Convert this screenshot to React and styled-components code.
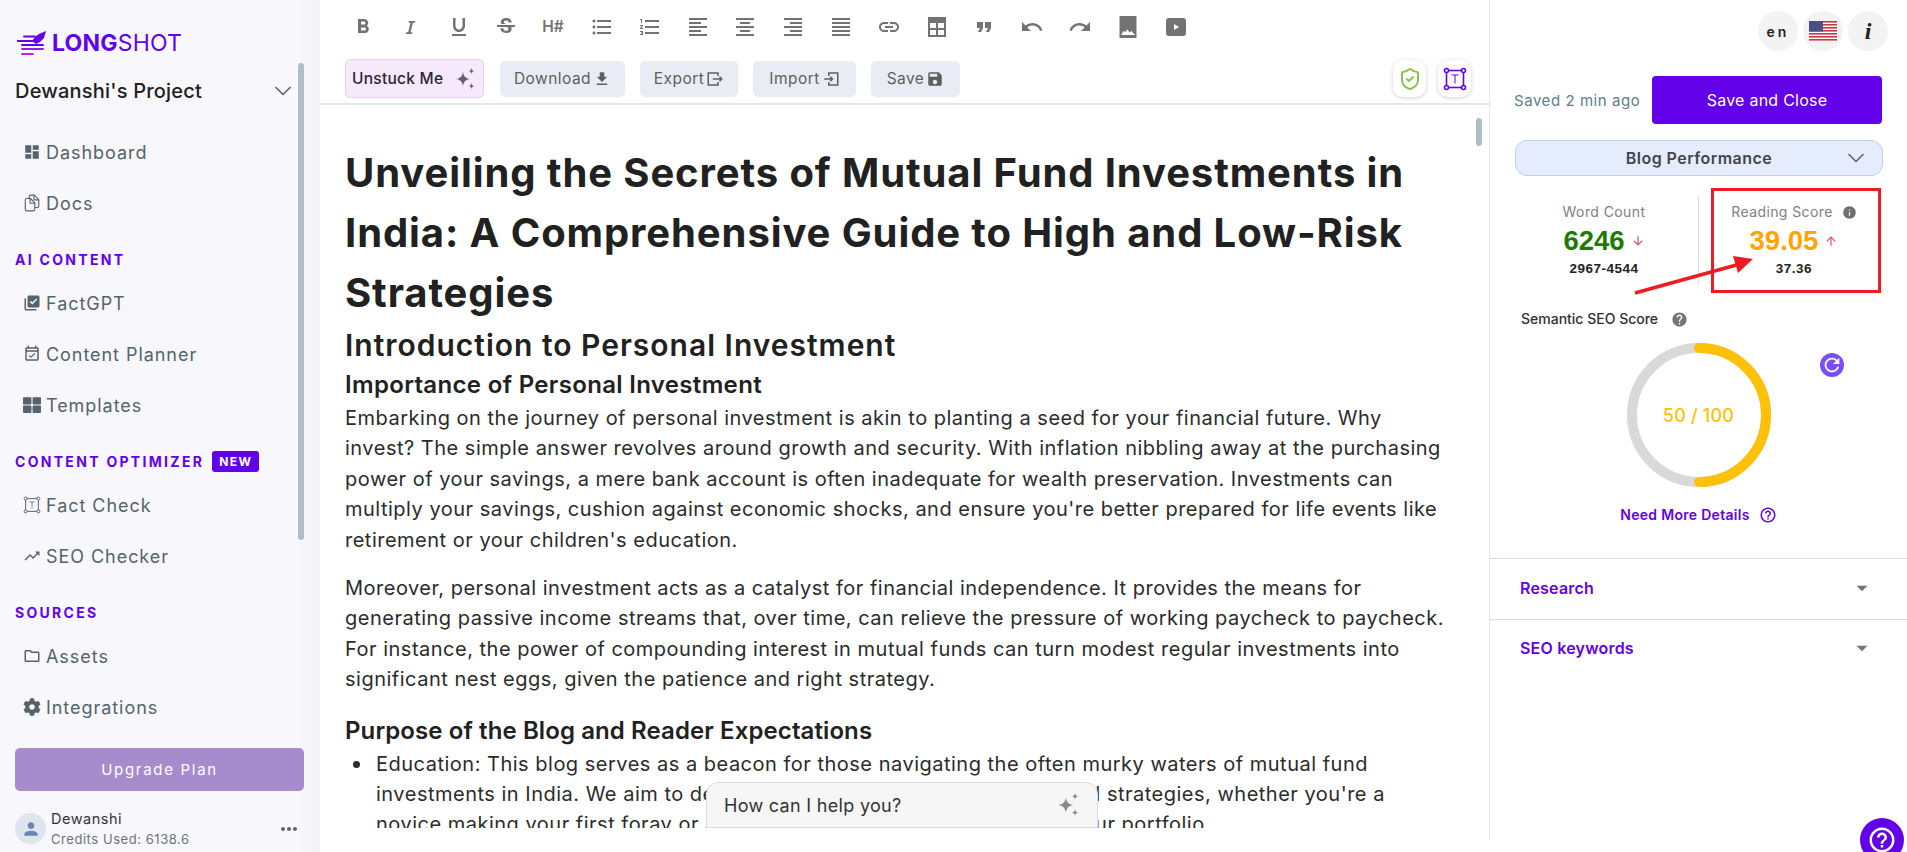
import React from "react";
import styled, { createGlobalStyle } from "styled-components";
import {
  MdFormatBold, MdFormatUnderlined, MdStrikethroughS, MdFormatListBulleted, MdFormatListNumbered,
  MdFormatAlignLeft, MdFormatAlignCenter, MdFormatAlignRight, MdFormatAlignJustify, MdLink, MdFormatQuote,
  MdUndo, MdRedo, MdFileDownload, MdSave, MdDashboard, MdLibraryAddCheck, MdOutlineEventAvailable,
  MdTrendingUp, MdOutlineFolder, MdInfo, MdHelp, MdOutlineHelpOutline, MdArrowDropDown,
  MdPerson, MdMoreHoriz, MdRefresh, MdArrowDownward, MdArrowUpward,
} from "react-icons/md";
import { FaCog, FaItalic, FaThLarge } from "react-icons/fa";
import { IoDocumentsOutline } from "react-icons/io5";
import { ShieldCheck, ChevronDown } from "lucide-react";

const PURPLE = "#6200ea";
const UI_FONT = '"Inter", "Noto Sans", sans-serif';

const Global = createGlobalStyle`
  html, body { margin: 0; padding: 0; background: #fff; }
  body { font-family: ${UI_FONT}; overflow: hidden; }
  * { box-sizing: border-box; }
`;

const Page = styled.div`
  position: relative;
  width: 1907px;
  height: 852px;
  overflow: hidden;
  display: grid;
  grid-template-columns: 320px 1170px 417px;
  background: #fff;
`;

/* ---------- sidebar ---------- */
const Sidebar = styled.aside`
  position: relative;
  height: 852px;
  background: linear-gradient(90deg, #f7f7fc 0, #f7f7fc 300px, #f1f1f6 320px);
  padding: 31px 16px 0 15px;
  display: flex;
  flex-direction: column;
`;
const Thumb = styled.div`
  position: absolute;
  left: 298px;
  top: 63px;
  width: 6px;
  height: 477px;
  border-radius: 3px;
  background: #b0bec5;
`;
const Logo = styled.div`
  display: flex;
  align-items: center;
  gap: 5px;
  height: 25px;
  margin-left: 2px;
  color: ${PURPLE};
  font-size: 23px;
  line-height: 25px;
  letter-spacing: 0.2px;
  b { font-weight: 700; }
  span { font-weight: 400; }
`;
const ProjectRow = styled.div`
  display: flex;
  align-items: center;
  justify-content: space-between;
  margin-top: 20px;
  height: 30px;
  padding-right: 7px;
  font-size: 20px;
  letter-spacing: 0.2px;
  font-weight: 500;
  color: #212121;
  svg { color: #666; }
`;
const NavList = styled.div`
  margin-top: 20.5px;
  display: flex;
  flex-direction: column;
`;
const NavItem = styled.div`
  height: 51px;
  display: flex;
  align-items: center;
  gap: 5px;
  padding-left: 8px;
  font-size: 18px;
  letter-spacing: 0.95px;
  color: #56636b;
  svg { width: 18px; height: 18px; flex: none; }
`;
const SectionLabel = styled.div`
  height: 49px;
  display: flex;
  align-items: center;
  gap: 8px;
  padding-top: 12px;
  font-size: 14px;
  font-weight: 700;
  letter-spacing: 2.3px;
  color: ${PURPLE};
`;
const NewBadge = styled.span`
  background: ${PURPLE};
  color: #fff;
  border-radius: 3px;
  font-size: 12px;
  line-height: 21px;
  padding: 0 7px;
  letter-spacing: 1.4px;
`;
const UpgradeButton = styled.div`
  margin-top: 15px;
  width: 289px;
  height: 43px;
  border-radius: 5px;
  background: #a78ccd;
  color: #fff;
  display: flex;
  align-items: center;
  justify-content: center;
  font-size: 15px;
  letter-spacing: 1.7px;
`;
const UserRow = styled.div`
  margin-top: 18px;
  width: 289px;
  display: flex;
  align-items: center;
  gap: 5px;
  padding-right: 3px;
`;
const Avatar = styled.div`
  width: 31px;
  height: 31px;
  border-radius: 50%;
  background: #dfe5ec;
  color: #6b86b4;
  display: flex;
  align-items: center;
  justify-content: center;
`;
const UserText = styled.div`
  flex: 1;
  line-height: 20px;
  div:first-child { font-size: 14.5px; color: #333; letter-spacing: 0.5px; }
  div:last-child { font-size: 13px; color: #6c757d; letter-spacing: 0.55px; }
`;

/* ---------- editor ---------- */
const Editor = styled.main`
  position: relative;
  height: 840px;
  border-right: 1px solid #e8e8e8;
  display: flex;
  flex-direction: column;
`;
const Toolbar = styled.div`
  height: 105px;
  flex: none;
  border-bottom: 2px solid #e6e6e6;
  padding: 15px 18px 0 25px;
`;
const FormatRow = styled.div`
  display: flex;
  height: 24px;
  align-items: center;
  padding-left: 6px;
`;
const FormatButton = styled.div`
  width: 47.8px;
  flex: none;
  color: #737373;
  font-size: 15.5px;
  font-weight: 600;
  display: flex;
  svg { width: 24px; height: 24px; }
`;
const ActionRow = styled.div`
  margin-top: 20px;
  display: flex;
  align-items: center;
`;
const UnstuckButton = styled.div`
  width: 139px;
  height: 39px;
  margin-right: 16px;
  border-radius: 5px;
  background: #f5e9fb;
  border: 1px solid #e6cff2;
  padding: 0 6px;
  display: flex;
  align-items: center;
  justify-content: space-between;
  font-size: 15.5px;
  letter-spacing: 0.25px;
  font-weight: 500;
  color: #2c2438;
`;
const ActionButton = styled.div`
  height: 36px;
  width: ${(p) => p.$w}px;
  margin-right: ${(p) => p.$gap}px;
  border-radius: 5px;
  background: #e9ecf4;
  color: #5f5f5f;
  display: flex;
  align-items: center;
  justify-content: center;
  gap: 2px;
  font-size: 15.5px;
  letter-spacing: 0.45px;
  svg { width: 18px; height: 18px; }
`;
const ToolIcons = styled.div`
  margin-left: auto;
  display: flex;
  gap: 12px;
`;
const ToolIcon = styled.div`
  width: 33px;
  height: 37px;
  border-radius: 10px;
  background: #fff;
  box-shadow: 0 1px 4px rgba(0, 0, 0, 0.18);
  display: flex;
  align-items: center;
  justify-content: center;
`;
const Scroller = styled.div`
  height: 723px;
  overflow: hidden;
  padding: 38px 0 0 25px;
  color: #212121;
  white-space: nowrap;
`;
const EditorThumb = styled.div`
  position: absolute;
  left: 1156px;
  top: 118px;
  width: 6px;
  height: 28px;
  border-radius: 3px;
  background: #b0bec5;
`;
const Title = styled.h1`
  margin: 0;
  font-size: 40px;
  letter-spacing: 0.9px;
  line-height: 60px;
  font-weight: 700;
`;
const SubTitle = styled.h2`
  margin: 0;
  font-size: 30px;
  letter-spacing: 1px;
  line-height: 44px;
  font-weight: 600;
`;
const SubHead = styled.h3`
  margin: ${(p) => p.$top || 0}px 0 0;
  font-size: 24px;
  letter-spacing: ${(p) => p.$ls}px;
  line-height: 36px;
  font-weight: 600;
`;
const Para = styled.p`
  margin: ${(p) => p.$top || 0}px 0 0;
  font-size: 20px;
  letter-spacing: 0.5px;
  line-height: 30.4px;
  color: #2b2b2b;
`;
const Bullets = styled.ul`
  margin: 0;
  padding-left: 31px;
  list-style: none;
  font-size: 20px;
  letter-spacing: 0.5px;
  line-height: 30.4px;
  color: #2b2b2b;
`;
const Bullet = styled.li`
  position: relative;
  &::before {
    content: "";
    position: absolute;
    left: -23px;
    top: 12px;
    width: 7px;
    height: 7px;
    border-radius: 50%;
    background: #2b2b2b;
  }
`;
const ChatBox = styled.div`
  position: absolute;
  left: 706px;
  top: 782px;
  width: 392px;
  height: 46px;
  background: #f6f6f6;
  border: 1px solid #dcdcdc;
  border-radius: 12px 12px 0 0;
  padding: 0 16px 0 17px;
  display: flex;
  align-items: center;
  justify-content: space-between;
  font-size: 18px;
  letter-spacing: 0.3px;
  color: #333;
`;

/* ---------- right panel ---------- */
const Panel = styled.aside`
  height: 852px;
  display: flex;
  flex-direction: column;
`;
const TopChips = styled.div`
  display: flex;
  justify-content: flex-end;
  gap: 5px;
  padding: 11px 19px 0 0;
`;
const Chip = styled.div`
  width: 40px;
  height: 40px;
  border-radius: 50%;
  background: #f3f3f3;
  display: flex;
  align-items: center;
  justify-content: center;
  font-size: 14px;
  font-weight: 600;
  color: #222;
  letter-spacing: 3px;
`;
const InfoGlyph = styled.span`
  font-family: "Liberation Serif", serif;
  font-style: italic;
  font-weight: 700;
  font-size: 24px;
  letter-spacing: 0;
`;
const SaveRow = styled.div`
  margin-top: 25px;
  display: flex;
  align-items: center;
  justify-content: space-between;
  padding: 0 25px 0 24px;
`;
const SavedText = styled.span`
  font-size: 15px;
  letter-spacing: 0.55px;
  color: #607d8b;
`;
const SaveClose = styled.div`
  width: 230px;
  height: 48px;
  border-radius: 4px;
  background: ${PURPLE};
  color: #fff;
  display: flex;
  align-items: center;
  justify-content: center;
  font-size: 16px;
  letter-spacing: 0.25px;
`;
const PerfSelect = styled.div`
  position: relative;
  margin: 16px 24px 0 25px;
  height: 36px;
  border-radius: 12px;
  background: #e5ecfb;
  border: 1px solid #c3cde0;
  display: flex;
  align-items: center;
  justify-content: center;
  font-size: 16px;
  letter-spacing: 0.45px;
  font-weight: 600;
  color: #44444f;
  svg { position: absolute; right: 12px; top: 3px; color: #666; }
`;
const Stats = styled.div`
  margin-top: 20px;
  height: 89px;
  display: grid;
  grid-template-columns: 209px 1fr;
`;
const Stat = styled.div`
  padding-left: ${(p) => p.$pad || 0}px;
  padding-top: 6px;
  width: ${(p) => p.$w || "auto"};
  text-align: center;
  border-right: ${(p) => (p.$line ? "1px solid #dcdcdc" : "none")};
`;
const StatLabel = styled.div`
  font-size: 14px;
  line-height: 20px;
  color: #808080;
  display: flex;
  justify-content: center;
  align-items: center;
  gap: 9px;
  letter-spacing: 0.4px;
  svg { color: #6f6f6f; }
`;
const StatValue = styled.div`
  margin-top: 2px;
  font-family: "Liberation Sans", Arial, sans-serif;
  font-weight: 700;
  font-size: 27.5px;
  line-height: 34px;
  color: ${(p) => p.$color};
  display: flex;
  justify-content: center;
  align-items: center;
  gap: 6px;
  svg { color: #f0476b; }
`;
const StatRange = styled.div`
  margin-top: 2px;
  font-family: "Liberation Sans", Arial, sans-serif;
  font-weight: 700;
  font-size: 13.5px;
  letter-spacing: 0.5px;
  line-height: 17px;
  color: #222;
`;
const ScoreTitle = styled.div`
  margin: 24px 0 0 31px;
  font-size: 14px;
  line-height: 20px;
  font-weight: 500;
  color: #2f2f2f;
  display: flex;
  align-items: center;
  gap: 13px;
  svg { color: #757575; }
`;
const ScoreRow = styled.div`
  position: relative;
  margin-top: 14px;
  height: 144px;
  display: flex;
  justify-content: center;
`;
const RingBox = styled.div`
  position: relative;
  width: 144px;
  height: 144px;
  display: flex;
  align-items: center;
  justify-content: center;
  font-size: 18px;
  letter-spacing: 0.2px;
  font-weight: 500;
  color: #ffc107;
  svg { position: absolute; inset: 0; }
`;
const RefreshBadge = styled.div`
  position: absolute;
  left: 330px;
  top: 10px;
  width: 24px;
  height: 24px;
  border-radius: 50%;
  background: #7c4dff;
  color: #fff;
  display: flex;
  align-items: center;
  justify-content: center;
`;
const DetailsLink = styled.div`
  margin-top: 18px;
  display: flex;
  justify-content: center;
  align-items: center;
  gap: 9px;
  font-size: 14px;
  letter-spacing: 0.3px;
  line-height: 20px;
  font-weight: 600;
  color: ${PURPLE};
`;
const Accordion = styled.div`
  height: ${(p) => p.$h}px;
  border-top: 1px solid #dcdcdc;
  margin-top: ${(p) => p.$top || 0}px;
  padding: 0 32px 3px 30px;
  display: flex;
  align-items: center;
  justify-content: space-between;
  font-size: 16px;
  letter-spacing: 0.2px;
  font-weight: 600;
  color: ${PURPLE};
  svg { color: #757575; }
`;
const Annotation = styled.svg`
  position: absolute;
  left: 1630px;
  top: 185px;
  pointer-events: none;
`;
const HelpFab = styled.div`
  position: absolute;
  left: 1860px;
  top: 818px;
  width: 44px;
  height: 44px;
  border-radius: 50%;
  background: ${PURPLE};
  color: #fff;
  display: flex;
  align-items: center;
  justify-content: center;
`;

/* ---------- drawings ---------- */
const Sparkles = ({ color, size = 22 }) => (
  <svg width={size} height={size} viewBox="0 0 24 24" fill={color}>
    <path d="M10 5c.9 4.6 2.4 6.1 7 7-4.6.9-6.1 2.4-7 7-.9-4.6-2.4-6.1-7-7 4.6-.9 6.1-2.4 7-7z" />
    <path d="M18.5 1c.4 2.1 1 2.7 3 3-2 .4-2.6 1-3 3-.4-2-1-2.6-3-3 2-.3 2.6-.9 3-3z" />
    <path d="M18.5 16c.4 2.1 1 2.7 3 3-2 .4-2.6 1-3 3-.4-2-1-2.6-3-3 2-.3 2.6-.9 3-3z" />
  </svg>
);

const LogoMark = () => (
  <svg width="30" height="25" viewBox="0 0 30 25" fill="none" strokeLinecap="round">
    <path d="M7 5.5h11M0 10h21M5 14h21" stroke={PURPLE} strokeWidth="1.8" />
    <path d="M5 18h21" stroke="#8a1ff0" strokeWidth="1.8" />
    <path d="M5 23h11" stroke="#c81fe8" strokeWidth="1.8" />
    <path d="M15 10l3-4 4-3 7-3-2 7-4 4-4 2z" fill={PURPLE} />
  </svg>
);

const FrameT = ({ color, size, sw = 1.6 }) => (
  <svg width={size} height={size} viewBox="0 0 24 24" fill="none" stroke={color} strokeWidth={sw}>
    <rect x="3.5" y="3.5" width="17" height="17" />
    <circle cx="3.5" cy="3.5" r="2" fill="#fff" />
    <circle cx="20.5" cy="3.5" r="2" fill="#fff" />
    <circle cx="3.5" cy="20.5" r="2" fill="#fff" />
    <circle cx="20.5" cy="20.5" r="2" fill="#fff" />
    <path d="M8.5 8h7M12 8v8.5" strokeWidth="1" />
  </svg>
);

const ExportIcon = () => (
  <svg viewBox="0 0 24 24" fill="none" stroke="currentColor" strokeWidth="2">
    <path d="M16 8V4H3v16h13v-4M9 12h12M18 9l3 3-3 3" />
  </svg>
);
const ImportIcon = () => (
  <svg viewBox="0 0 24 24" fill="none" stroke="currentColor" strokeWidth="2">
    <path d="M9 8V4h12v16H9v-4M3 12h11M11 9l3 3-3 3" />
  </svg>
);
const TableIcon = () => (
  <svg viewBox="0 0 24 24" fill="#737373">
    <path d="M3 2h18v20H3zM5 8v5h6V8zm8 0v5h6V8zm-8 7v5h6v-5zm8 0v5h6v-5z" fillRule="evenodd" />
  </svg>
);
const ImageIcon = () => (
  <svg viewBox="0 0 24 24" fill="#737373">
    <path d="M3.5 1h17v22h-17zM5 20h14l-3.5-4-2 1.5-2-3-2.5 2.500-1.500-1z" fillRule="evenodd" />
  </svg>
);
const VideoIcon = () => (
  <svg viewBox="0 0 24 24" fill="#737373">
    <path d="M5 3h14a3 3 0 0 1 3 3v12a3 3 0 0 1-3 3H5a3 3 0 0 1-3-3V6a3 3 0 0 1 3-3zm5 6v6l5-3z" fillRule="evenodd" />
  </svg>
);
const Flag = () => (
  <svg width="28" height="20" viewBox="0 0 28 20">
    <rect width="28" height="20" rx="2" fill="#fff" />
    {[0, 3, 6, 9, 12, 15, 18].map((y) => (
      <rect key={y} y={y} width="28" height="1.6" fill="#c9383f" />
    ))}
    <rect width="14" height="10.5" fill="#4a4f86" />
  </svg>
);

const Ring = () => (
  <svg width="144" height="144" viewBox="0 0 144 144" fill="none">
    <circle cx="72" cy="72" r="67" stroke="#d9d9d9" strokeWidth="10" />
    <path d="M72 5a67 67 0 0 1 0 134" stroke="#ffc107" strokeWidth="10" strokeLinecap="round" />
  </svg>
);

const formatIcons = [
  <MdFormatBold />, <FaItalic style={{ width: 15, height: 15, margin: "4px" }} />, <MdFormatUnderlined />, <MdStrikethroughS />,
  <span style={{ lineHeight: "24px" }}>H#</span>, <MdFormatListBulleted />, <MdFormatListNumbered />, <MdFormatAlignLeft />,
  <MdFormatAlignCenter />, <MdFormatAlignRight />, <MdFormatAlignJustify />, <MdLink />, <TableIcon />, <MdFormatQuote />,
  <MdUndo />, <MdRedo />, <ImageIcon />, <VideoIcon />,
];

const TfIcon = () => <FrameT color="#56636b" size={18} sw={1.3} />;

export default function App() {
  return (
    <Page>
      <Global />
      <Sidebar>
        <Logo>
          <LogoMark />
          <div><b>LONG</b><span>SHOT</span></div>
        </Logo>
        <ProjectRow>
          Dewanshi's Project
          <ChevronDown size={28} strokeWidth={1.5} />
        </ProjectRow>
        <NavList>
          <NavItem><MdDashboard />Dashboard</NavItem>
          <NavItem><IoDocumentsOutline />Docs</NavItem>
          <SectionLabel>AI CONTENT</SectionLabel>
          <NavItem><MdLibraryAddCheck />FactGPT</NavItem>
          <NavItem><MdOutlineEventAvailable />Content Planner</NavItem>
          <NavItem><FaThLarge />Templates</NavItem>
          <SectionLabel>CONTENT OPTIMIZER<NewBadge>NEW</NewBadge></SectionLabel>
          <NavItem><TfIcon />Fact Check</NavItem>
          <NavItem><MdTrendingUp />SEO Checker</NavItem>
          <SectionLabel>SOURCES</SectionLabel>
          <NavItem><MdOutlineFolder />Assets</NavItem>
          <NavItem><FaCog />Integrations</NavItem>
        </NavList>
        <UpgradeButton>Upgrade Plan</UpgradeButton>
        <UserRow>
          <Avatar><MdPerson size={20} /></Avatar>
          <UserText>
            <div>Dewanshi</div>
            <div>Credits Used: 6138.6</div>
          </UserText>
          <MdMoreHoriz size={24} color="#666" />
        </UserRow>
        <Thumb />
      </Sidebar>

      <Editor>
        <Toolbar>
          <FormatRow>
            {formatIcons.map((icon, i) => (
              <FormatButton key={i}>{icon}</FormatButton>
            ))}
          </FormatRow>
          <ActionRow>
            <UnstuckButton>Unstuck Me <Sparkles color="#6b5b7d" size={24} /></UnstuckButton>
            <ActionButton $w={125} $gap={15}>Download<MdFileDownload /></ActionButton>
            <ActionButton $w={98} $gap={15}>Export<ExportIcon /></ActionButton>
            <ActionButton $w={103} $gap={15}>Import<ImportIcon /></ActionButton>
            <ActionButton $w={89} $gap={0}>Save<MdSave /></ActionButton>
            <ToolIcons>
              <ToolIcon><ShieldCheck size={24} color="#8bc34a" /></ToolIcon>
              <ToolIcon><FrameT color={PURPLE} size={24} /></ToolIcon>
            </ToolIcons>
          </ActionRow>
        </Toolbar>
        <Scroller>
          <Title>
            Unveiling the Secrets of Mutual Fund Investments in<br />
            India: A Comprehensive Guide to High and Low-Risk<br />
            Strategies
          </Title>
          <SubTitle>Introduction to Personal Investment</SubTitle>
          <SubHead $ls={0.33}>Importance of Personal Investment</SubHead>
          <Para>
            Embarking on the journey of personal investment is akin to planting a seed for your financial future. Why<br />
            invest? The simple answer revolves around growth and security. With inflation nibbling away at the purchasing<br />
            power of your savings, a mere bank account is often inadequate for wealth preservation. Investments can<br />
            multiply your savings, cushion against economic shocks, and ensure you're better prepared for life events like<br />
            retirement or your children's education.
          </Para>
          <Para $top={18}>
            Moreover, personal investment acts as a catalyst for financial independence. It provides the means for<br />
            generating passive income streams that, over time, can relieve the pressure of working paycheck to paycheck.<br />
            For instance, the power of compounding interest in mutual funds can turn modest regular investments into<br />
            significant nest eggs, given the patience and right strategy.
          </Para>
          <SubHead $top={18} $ls={0.1}>Purpose of the Blog and Reader Expectations</SubHead>
          <Bullets>
            <Bullet>
              Education: This blog serves as a beacon for those navigating the often murky waters of mutual fund<br />
              investments in India. We aim to demystify mutual fund concepts, risk and strategies, whether you're a<br />
              novice making your first foray or a seasoned investor aiming to refine your portfolio.
            </Bullet>
          </Bullets>
        </Scroller>
        <EditorThumb />
      </Editor>

      <Panel>
        <TopChips>
          <Chip>en</Chip>
          <Chip><Flag /></Chip>
          <Chip><InfoGlyph>i</InfoGlyph></Chip>
        </TopChips>
        <SaveRow>
          <SavedText>Saved 2 min ago</SavedText>
          <SaveClose>Save and Close</SaveClose>
        </SaveRow>
        <PerfSelect>
          Blog Performance
          <ChevronDown size={28} strokeWidth={1.5} />
        </PerfSelect>
        <Stats>
          <Stat $line $pad={20}>
            <StatLabel>Word Count</StatLabel>
            <StatValue $color="#1f7a00">6246<MdArrowDownward size={14} /></StatValue>
            <StatRange>2967-4544</StatRange>
          </Stat>
          <Stat $w="166px" $pad={24}>
            <StatLabel>Reading Score <MdInfo size={15} /></StatLabel>
            <StatValue $color="#ffa500">39.05<MdArrowUpward size={14} /></StatValue>
            <StatRange>37.36</StatRange>
          </Stat>
        </Stats>
        <ScoreTitle>Semantic SEO Score <MdHelp size={17} /></ScoreTitle>
        <ScoreRow>
          <RingBox><Ring />50 / 100</RingBox>
          <RefreshBadge><MdRefresh size={22} /></RefreshBadge>
        </ScoreRow>
        <DetailsLink>Need More Details <MdOutlineHelpOutline size={18} /></DetailsLink>
        <Accordion $h={61} $top={33}>Research<MdArrowDropDown size={26} /></Accordion>
        <Accordion $h={60}>SEO keywords<MdArrowDropDown size={26} /></Accordion>
      </Panel>

      <ChatBox>How can I help you?<Sparkles color="#8a8a8a" size={26} /></ChatBox>
      <Annotation width="260" height="112" viewBox="0 0 260 112">
        <rect x="82.5" y="4.5" width="167" height="102" fill="none" stroke="#ed1c24" strokeWidth="3" />
        <path d="M5 108l105-29" stroke="#ed1c24" strokeWidth="3.5" />
        <path d="M123 74l-20-3 5 17z" fill="#ed1c24" />
      </Annotation>
      <HelpFab><MdOutlineHelpOutline size={30} /></HelpFab>
    </Page>
  );
}
